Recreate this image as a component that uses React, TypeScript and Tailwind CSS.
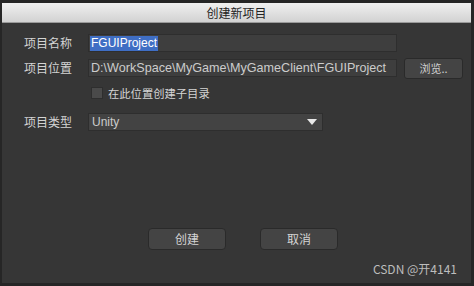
import React from "react";

const font = { fontFamily: '"Noto Sans CJK SC", "Liberation Sans", sans-serif' };

export default function App() {
  return (
    <div className="w-[474px] h-[286px] bg-[#262626] p-[2px] pr-[3px] pb-[3px] flex flex-col" style={font}>
      <div className="h-[20px] mt-[1px] flex items-center justify-center bg-gradient-to-b from-[#f0f0f0] to-[#d2d2d2] border-b border-[#9a9a9a] text-[12px] text-[#222] leading-none">
        创建新项目
      </div>
      <div className="flex-1 bg-[#363636] flex flex-col relative">
        <div className="flex items-center h-[18px] mt-[11px]">
          <div className="w-[86px] pl-[22px] text-[12px] text-[#d4d4d4]">项目名称</div>
          <div className="w-[309px] h-[18px] bg-[#3e3e3e] border border-[#2e2e2e] flex items-center pl-[1px]">
            <span className="bg-[#3f6ec4] text-white text-[12px] leading-[15px] px-[1px]" style={{ fontFamily: '"Liberation Sans", sans-serif' }}>FGUIProject</span>
          </div>
        </div>
        <div className="flex items-center h-[20px] mt-[6px]">
          <div className="w-[86px] pl-[22px] text-[12px] text-[#d4d4d4]">项目位置</div>
          <div className="w-[309px] h-[18px] bg-[#3e3e3e] border border-[#2e2e2e] flex items-center pl-[2px] text-[12.6px] text-[#cccccc]" style={{ fontFamily: '"Liberation Sans", sans-serif' }}>
            D:\WorkSpace\MyGame\MyGameClient\FGUIProject
          </div>
          <div className="ml-[7px] w-[59px] h-[21px] rounded-[3px] bg-[#444] border border-[#2a2a2a] flex items-center justify-center text-[11px] text-[#cfcfcf]">
            浏览..
          </div>
        </div>
        <div className="flex items-center h-[14px] mt-[8px] pl-[89px]">
          <div className="w-[12px] h-[12px] bg-[#4a4a4a] border border-[#2e2e2e]" />
          <div className="ml-[5px] text-[11.3px] text-[#d4d4d4]">在此位置创建子目录</div>
        </div>
        <div className="flex items-center h-[18px] mt-[13px]">
          <div className="w-[86px] pl-[22px] text-[12px] text-[#d4d4d4]">项目类型</div>
          <div className="w-[235px] h-[18px] bg-[#434343] border border-[#2e2e2e] flex items-center justify-between pl-[3px] pr-[5px] text-[12px] text-[#cccccc]" style={{ fontFamily: '"Liberation Sans", sans-serif' }}>
            <span>Unity</span>
            <svg width="10" height="6" viewBox="0 0 10 6"><path d="M0 0 L10 0 L5 6 Z" fill="#e8e8e8" /></svg>
          </div>
        </div>
        <div className="flex mt-[97px] pl-[146px] gap-[34px]">
          <div className="w-[78px] h-[22px] rounded-[4px] bg-[#444] border border-[#2a2a2a] flex items-center justify-center text-[12px] text-[#d4d4d4]">创建</div>
          <div className="w-[78px] h-[22px] rounded-[4px] bg-[#444] border border-[#2a2a2a] flex items-center justify-center text-[12px] text-[#d4d4d4]">取消</div>
        </div>
        <div className="absolute right-[14px] bottom-[5px] text-[12px] text-[#bdbdbd]" style={font}>CSDN @开4141</div>
      </div>
    </div>
  );
}
